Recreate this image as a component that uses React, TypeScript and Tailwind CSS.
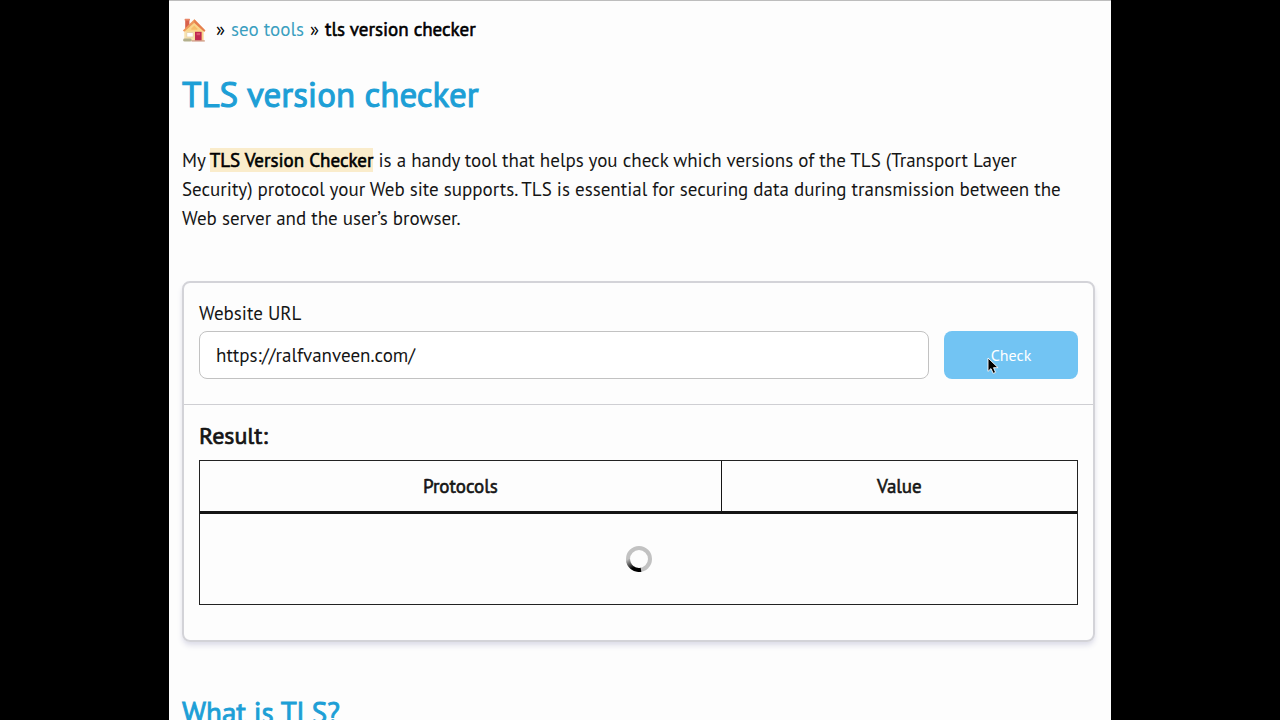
function HouseIcon() {
  return (
    <svg viewBox="0 0 24 24" className="h-6 w-6" aria-hidden="true">
      <rect x="3.2" y="2" width="4.2" height="9" fill="#d8604c" />
      <rect x="2.6" y="0.8" width="5.4" height="1.8" rx="0.5" fill="#e88566" />
      <path d="M2.6 12.6 12.3 4l9.3 8.6V23H2.6z" fill="#f9d58b" />
      <path d="M2.6 13.6h10v9.4h-10z" fill="#f7e3b0" />
      <path d="M0.9 12.6 12.3 1.2 23.4 12.6 22.2 13.8 12.3 4.8 2.2 13.8z" fill="#ee9a5c" />
      <path d="M12.3 1.2 23.4 12.6 22.2 13.8 12.3 4.8z" fill="#e57f4f" />
      <path d="M9.3 10.5 12.3 7.6l3 2.9v1.2h-6z" fill="#f6bd6b" />
      <rect x="4.8" y="14.6" width="6.4" height="4.4" fill="#fff" stroke="#e6cfa6" strokeWidth="0.8" />
      <rect x="13" y="13.8" width="6.6" height="9.2" fill="#bf2850" />
      <rect x="14.6" y="15" width="3.4" height="2.2" fill="#d9506e" />
      <rect x="1.2" y="20.4" width="8.4" height="3.2" rx="1.4" fill="#b3b08c" />
      <rect x="9.6" y="22.2" width="13.2" height="1.4" fill="#d3a08a" />
    </svg>
  );
}

function Spinner() {
  return (
    <svg viewBox="0 0 26 26" className="mx-auto h-[26px] w-[26px]" role="img" aria-label="Loading">
      <defs>
        <linearGradient id="fade" x1="2" y1="13" x2="9" y2="24" gradientUnits="userSpaceOnUse">
          <stop offset="0" stopColor="#c2c2c2" />
          <stop offset="0.3" stopColor="#777" />
          <stop offset="0.8" stopColor="#000" />
        </linearGradient>
      </defs>
      <circle cx="13" cy="13" r="11" fill="none" stroke="#c2c2c2" strokeWidth="4" />
      <path d="M2 13A11 11 0 0 0 15 23.8" fill="none" stroke="url(#fade)" strokeWidth="4" />
    </svg>
  );
}

function Pointer() {
  return (
    <svg viewBox="0 0 12 18" className="pointer-events-none absolute top-[26px] left-[43px] h-[18px] w-3" aria-hidden="true">
      <path d="M1 1v13.4l3-2.8 2.2 4.8 2.4-1-2.1-4.7h4.6z" fill="#000" stroke="#fff" strokeWidth="0.9" />
    </svg>
  );
}

export default function App() {
  return (
    <div className="h-screen overflow-hidden bg-black font-['PT_Sans','Noto_Sans',sans-serif] text-[19px] leading-[29px] text-[#151515]">
      <main className="mx-auto min-h-full max-w-[942px] border-t border-[#bdbdbd] bg-[#fdfdfd] pr-4 pl-[13px]">
        <nav aria-label="Breadcrumb" className="flex items-center gap-1.5 pt-[14px] text-black">
          <a href="#home" aria-label="Home" className="mr-1">
            <HouseIcon />
          </a>
          <span>»</span>
          <a href="#tools" className="text-[#3a9fc0]">seo tools</a>
          <span>»</span>
          <span className="[-webkit-text-stroke:0.03em_currentColor]">tls version checker</span>
        </nav>

        <h1 className="mt-[26px] text-[35px] leading-[48px] text-[#1d9fd6] [-webkit-text-stroke:0.03em_currentColor]">
          TLS version checker
        </h1>

        <p className="mt-7 pr-2">
          My{" "}
          <mark className="bg-[#faeccb] text-black [-webkit-text-stroke:0.03em_currentColor]">TLS Version Checker</mark>{" "}
          is a handy tool that helps you check which versions of the TLS (Transport Layer Security) protocol your Web
          site supports. TLS is essential for securing data during transmission between the Web server and the user’s
          browser.
        </p>

        <section className="mt-12 rounded-lg border-2 border-[#d3d3d8] shadow-md shadow-[#dcdce8]">
          <form className="border-b border-[#cfcfd3] px-[15px] pt-4 pb-[25px]" onSubmit={(e) => e.preventDefault()}>
            <label htmlFor="url" className="mb-1 block leading-7">Website URL</label>
            <div className="flex gap-[15px]">
              <input
                id="url"
                type="text"
                defaultValue="https://ralfvanveen.com/"
                className="h-12 min-w-0 flex-1 rounded-lg border border-[#c2c2c2] bg-white px-4 outline-none"
              />
              <div className="relative">
                <button type="submit" className="h-12 w-[134px] rounded-lg bg-[#72c4f3] text-base text-white">
                  Check
                </button>
                <Pointer />
              </div>
            </div>
          </form>

          <div className="px-[15px] pt-[15px] pb-[35px]">
            <h2 className="mb-2 text-2xl leading-8 [-webkit-text-stroke:0.03em_currentColor]">Result:</h2>
            <table className="w-full border-separate border-spacing-0 border border-[#222]">
              <thead>
                <tr className="[-webkit-text-stroke:0.03em_currentColor]">
                  <th className="h-[53px] w-[59.5%] border-r border-b-[3px] border-[#151515] p-0 font-normal">Protocols</th>
                  <th className="h-[53px] border-b-[3px] border-[#151515] p-0 font-normal">Value</th>
                </tr>
              </thead>
              <tbody>
                <tr>
                  <td colSpan={2} className="h-[90px] p-0">
                    <Spinner />
                  </td>
                </tr>
              </tbody>
            </table>
          </div>
        </section>

        <h2 className="mt-[50px] text-[29px] leading-10 text-[#1d9fd6] [-webkit-text-stroke:0.03em_currentColor]">
          What is TLS?
        </h2>
      </main>
    </div>
  );
}
